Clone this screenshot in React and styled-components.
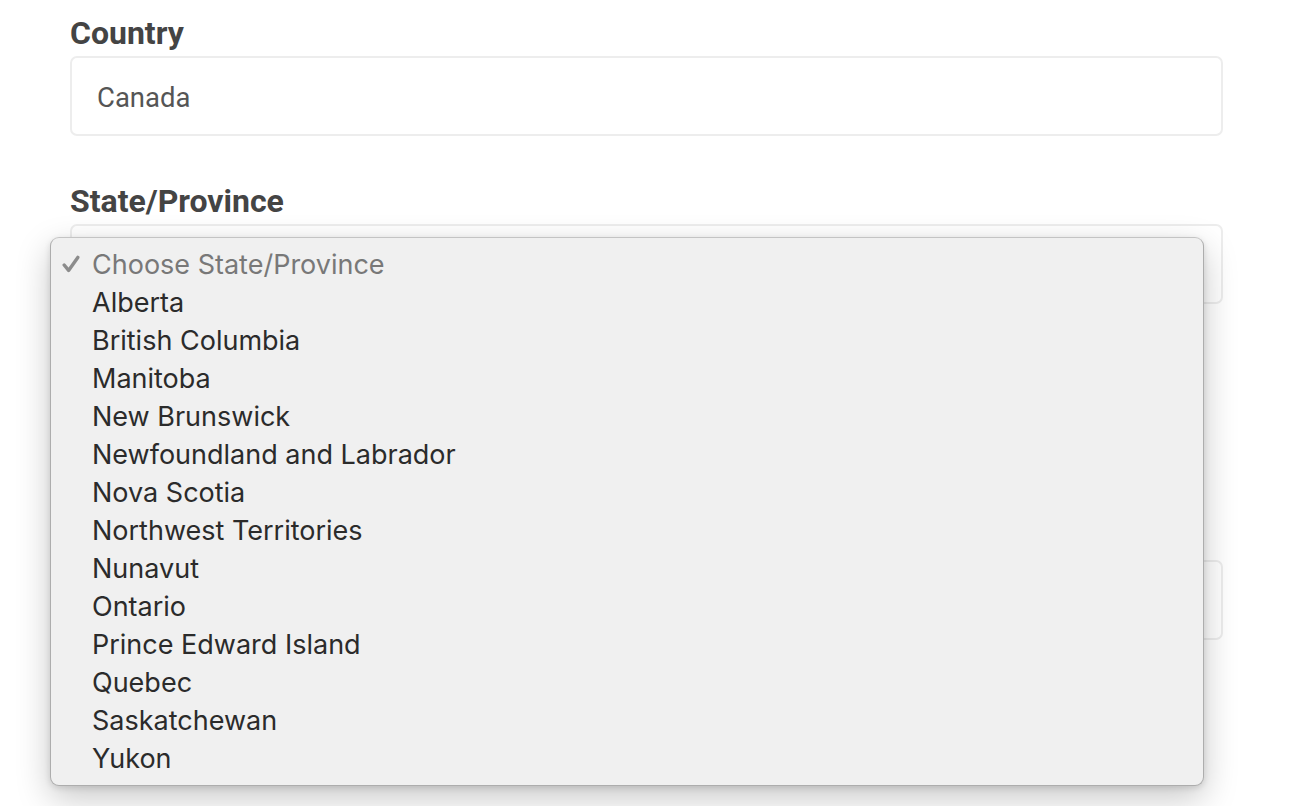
import React from "react";
import styled, { createGlobalStyle } from "styled-components";

const Global = createGlobalStyle`
  html, body { margin: 0; padding: 0; background: #ffffff; }
  body { width: 1302px; height: 806px; overflow: hidden; }
`;

const Page = styled.div`
  position: relative;
  width: 1302px;
  height: 806px;
  background: #fff;
`;

const Form = styled.form`
  display: flex;
  flex-direction: column;
  padding: 14px 79px 0 70px;
`;

const Field = styled.div`
  display: flex;
  flex-direction: column;
  gap: 4px;
  margin-bottom: 46px;
  width: ${(p) => p.$width || "100%"};
`;

const Label = styled.label`
  display: block;
  height: 38px;
  font-family: Roboto, "Liberation Sans", sans-serif;
  font-weight: 700;
  font-size: 32px;
  line-height: 38px;
  color: #444444;
`;

const Input = styled.div`
  box-sizing: border-box;
  height: 80px;
  border: 2px solid #ededed;
  border-radius: 7px;
  background: #fff;
  display: flex;
  align-items: center;
  padding: 2px 25px 0;
  font-family: Roboto, "Liberation Sans", sans-serif;
  font-size: 27.5px;
  color: #555555;
`;

const Menu = styled.ul`
  position: absolute;
  left: 50px;
  top: 237px;
  width: 1154px;
  box-sizing: border-box;
  margin: 0;
  padding: 7px 0 8px;
  list-style: none;
  background: #f0f0f0;
  border: 1px solid #adadad;
  border-top-color: #c4c4c4;
  border-radius: 9px;
  box-shadow: 0 12px 34px rgba(0, 0, 0, 0.22), 0 2px 6px rgba(0, 0, 0, 0.12);
`;

const Item = styled.li`
  position: relative;
  height: 38px;
  display: flex;
  align-items: center;
  padding-left: 41px;
  font-family: Inter, "Liberation Sans", sans-serif;
  font-size: 27px;
  color: ${(p) => (p.$placeholder ? "#787878" : "#2b2b2b")};
`;

const Check = styled.svg`
  position: absolute;
  left: 11px;
  top: 10px;
  width: 18px;
  height: 18px;
`;

const provinces = [
  "Alberta",
  "British Columbia",
  "Manitoba",
  "New Brunswick",
  "Newfoundland and Labrador",
  "Nova Scotia",
  "Northwest Territories",
  "Nunavut",
  "Ontario",
  "Prince Edward Island",
  "Quebec",
  "Saskatchewan",
  "Yukon",
];

export default function App() {
  return (
    <Page>
      <Global />
      <Form>
        <Field>
          <Label>Country</Label>
          <Input>Canada</Input>
        </Field>
        <Field>
          <Label>State/Province</Label>
          <Input aria-label="Choose State/Province" />
        </Field>
        <Field $width="80%">
          <Label aria-label="City" />
          <Input />
        </Field>
        <Field>
          <Label aria-label="Postal Code" />
          <Input />
        </Field>
      </Form>
      <Menu>
        <Item $placeholder>
          <Check viewBox="0 0 18 18">
            <path
              d="M2.2 10 L6.6 15.4 L15.8 2.4"
              fill="none"
              stroke="#8c8c8c"
              strokeWidth="3.4"
              strokeLinecap="round"
              strokeLinejoin="round"
            />
          </Check>
          Choose State/Province
        </Item>
        {provinces.map((p) => (
          <Item key={p}>{p}</Item>
        ))}
      </Menu>
    </Page>
  );
}
